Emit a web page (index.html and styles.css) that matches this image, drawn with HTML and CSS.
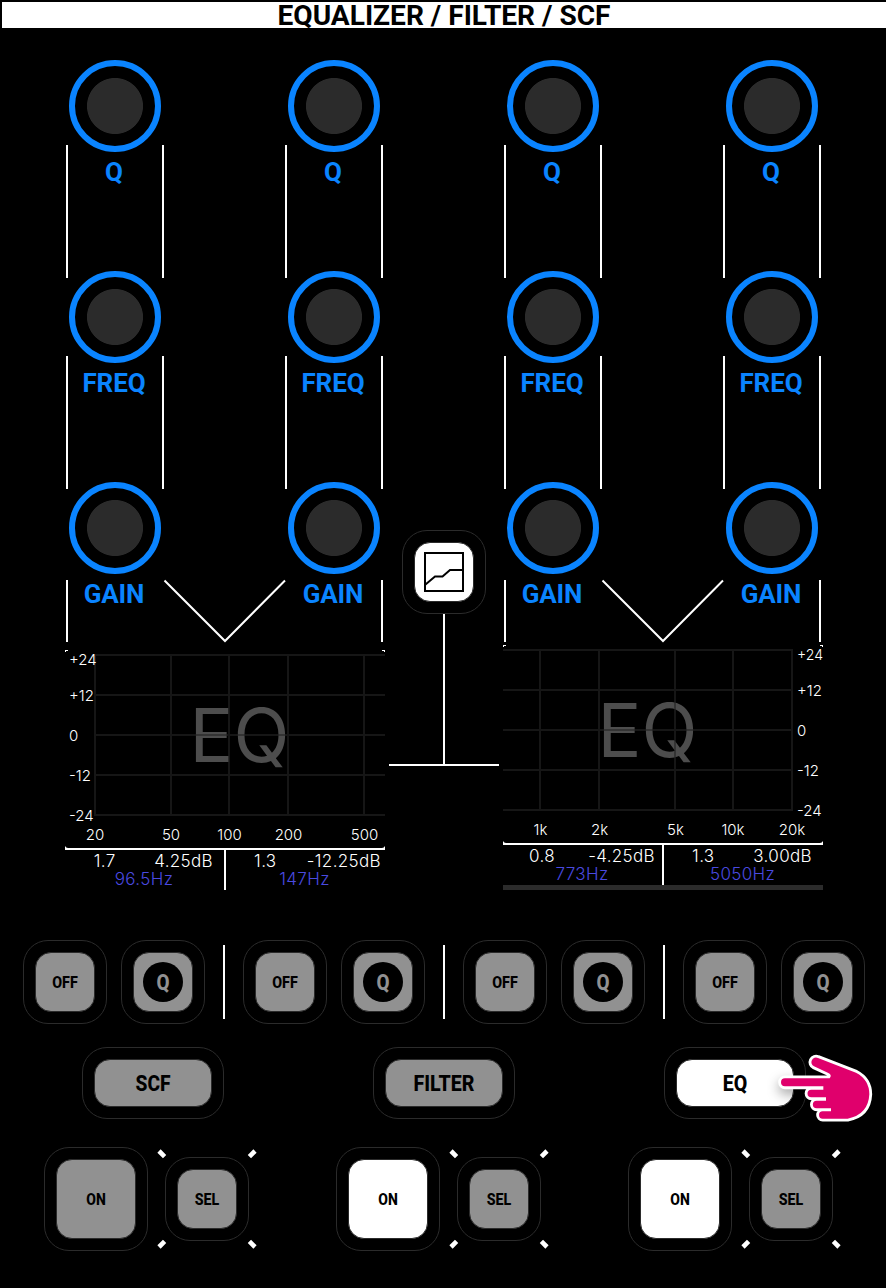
FILE: index.html
```html
<!DOCTYPE html>
<html lang="en">
<head>
<meta charset="utf-8">
<title>Equalizer / Filter / SCF</title>
<link rel="stylesheet" href="styles.css">
</head>
<body>
<main class="panel">
  <header class="title"><svg width="884" height="26"><text x="442" y="23" text-anchor="middle" textLength="333" lengthAdjust="spacingAndGlyphs">EQUALIZER / FILTER / SCF</text></svg></header>

  <section class="equalizer">
    <div class="band">
      <div class="knobs">
        <div class="cell"><div class="knob"></div><div class="stem">Q</div></div>
        <div class="cell"><div class="knob"></div><div class="stem">Q</div></div>
        <div class="cell"><div class="knob"></div><div class="stem">FREQ</div></div>
        <div class="cell"><div class="knob"></div><div class="stem">FREQ</div></div>
        <div class="cell last"><div class="knob"></div><div class="stem open-right">GAIN</div></div>
        <div class="cell last"><div class="knob"></div><div class="stem open-left">GAIN</div></div>
        <svg class="join" width="123" height="64"><path d="M0.500 0.500L61 61L121 0.500"/></svg>
      </div>
      <svg class="graph low" width="320" height="240">
        <path class="corner" d="M0 0H3V1H1V2H0ZM320 0H317V1H319V2H320ZM0 200V196Q1 198 3 198H317Q319 198 320 196V200Z"/>
        <text class="mark" x="124.500" y="112" textLength="100" lengthAdjust="spacingAndGlyphs">EQ</text>
        <path class="grid" d="M29 5H320M29 45H320M29 85H320M29 125H320M29 165H320M30 6V165M106 6V165M164 6V165M223 6V165M299 6V165"/>
        <g class="axis">
          <text x="4" y="15">+24</text><text x="4" y="51">+12</text><text x="4" y="91">0</text><text x="4" y="131">-12</text><text x="4" y="171">-24</text>
          <g text-anchor="middle"><text x="30" y="190">20</text><text x="106" y="190">50</text><text x="164.500" y="190">100</text><text x="223.500" y="190">200</text><text x="299.500" y="190">500</text></g>
        </g>
        <path class="divider" d="M160 200V240"/>
        <g class="value"><text x="50.500" y="217">1.7</text><text x="148" y="217">4.25dB</text><text x="211.500" y="217">1.3</text><text x="316" y="217">-12.25dB</text></g>
        <g class="hertz"><text x="79" y="235">96.5Hz</text><text x="239.500" y="235">147Hz</text></g>
      </svg>
    </div>

    <div class="link">
      <div class="button"><div class="cap lit"><svg width="40" height="40" class="curve"><path d="M1 1H39V39H1Z"/><path d="M1.500 32.500L11 24.500H18.500L26 18H39"/></svg></div></div>
      <div class="link-down"></div>
      <div class="link-across"></div>
    </div>

    <div class="band">
      <div class="knobs">
        <div class="cell"><div class="knob"></div><div class="stem">Q</div></div>
        <div class="cell"><div class="knob"></div><div class="stem">Q</div></div>
        <div class="cell"><div class="knob"></div><div class="stem">FREQ</div></div>
        <div class="cell"><div class="knob"></div><div class="stem">FREQ</div></div>
        <div class="cell last"><div class="knob"></div><div class="stem open-right">GAIN</div></div>
        <div class="cell last"><div class="knob"></div><div class="stem open-left">GAIN</div></div>
        <svg class="join" width="123" height="64"><path d="M0.500 0.500L61 61L121 0.500"/></svg>
      </div>
      <svg class="graph" width="320" height="245">
        <path class="corner" d="M0 0H3V1H1V2H0ZM320 0H317V1H319V2H320ZM0 200V196Q1 198 3 198H317Q319 198 320 196V200Z"/>
        <text class="mark" x="94.500" y="112" textLength="100" lengthAdjust="spacingAndGlyphs">EQ</text>
        <path class="grid" d="M0 5H290M0 45H290M0 85H290M0 125H290M0 165H290M37 6V165M96 6V165M172 6V165M230 6V165M289 6V165"/>
        <g class="axis">
          <text x="294" y="15" textLength="26" lengthAdjust="spacingAndGlyphs">+24</text><text x="294" y="51">+12</text><text x="294" y="91">0</text><text x="294" y="131">-12</text><text x="294" y="171">-24</text>
          <g text-anchor="middle"><text x="37.500" y="190">1k</text><text x="96.500" y="190">2k</text><text x="172.500" y="190">5k</text><text x="230" y="190">10k</text><text x="289" y="190">20k</text></g>
        </g>
        <path class="divider" d="M160 200V240"/>
        <g class="value"><text x="52" y="217">0.8</text><text x="152" y="217">-4.25dB</text><text x="211.500" y="217">1.3</text><text x="309" y="217">3.00dB</text></g>
        <g class="hertz"><text x="79" y="235">773Hz</text><text x="239.500" y="235">5050Hz</text></g>
        <path class="scroll" d="M0 240H320V245H0Z"/>
      </svg>
    </div>
  </section>

  <section class="toggles">
    <div class="button"><div class="cap"><svg width="58" height="58"><text x="29" y="34.500" textLength="25.500" lengthAdjust="spacingAndGlyphs">OFF</text></svg></div></div>
    <div class="button"><div class="cap"><svg width="58" height="58"><circle cx="29" cy="29" r="20"/><text class="q" x="29" y="37" textLength="13" lengthAdjust="spacingAndGlyphs">Q</text></svg></div></div>
    <div class="separator"></div>
    <div class="button"><div class="cap"><svg width="58" height="58"><text x="29" y="34.500" textLength="25.500" lengthAdjust="spacingAndGlyphs">OFF</text></svg></div></div>
    <div class="button"><div class="cap"><svg width="58" height="58"><circle cx="29" cy="29" r="20"/><text class="q" x="29" y="37" textLength="13" lengthAdjust="spacingAndGlyphs">Q</text></svg></div></div>
    <div class="separator"></div>
    <div class="button"><div class="cap"><svg width="58" height="58"><text x="29" y="34.500" textLength="25.500" lengthAdjust="spacingAndGlyphs">OFF</text></svg></div></div>
    <div class="button"><div class="cap"><svg width="58" height="58"><circle cx="29" cy="29" r="20"/><text class="q" x="29" y="37" textLength="13" lengthAdjust="spacingAndGlyphs">Q</text></svg></div></div>
    <div class="separator"></div>
    <div class="button"><div class="cap"><svg width="58" height="58"><text x="29" y="34.500" textLength="25.500" lengthAdjust="spacingAndGlyphs">OFF</text></svg></div></div>
    <div class="button"><div class="cap"><svg width="58" height="58"><circle cx="29" cy="29" r="20"/><text class="q" x="29" y="37" textLength="13" lengthAdjust="spacingAndGlyphs">Q</text></svg></div></div>
  </section>

  <section class="modes">
    <div class="button wide"><div class="cap"><svg width="116" height="46"><text class="mode" x="58" y="31" textLength="35" lengthAdjust="spacingAndGlyphs">SCF</text></svg></div></div>
    <div class="button wide"><div class="cap"><svg width="116" height="46"><text class="mode" x="58" y="31" textLength="61" lengthAdjust="spacingAndGlyphs">FILTER</text></svg></div></div>
    <div class="button wide"><div class="cap lit"><svg width="116" height="46"><text class="mode" x="58" y="31" textLength="24.500" lengthAdjust="spacingAndGlyphs">EQ</text></svg></div>
      <svg class="hand" width="130" height="95" viewBox="390 20 390 285"><path d="M531 68L645 112Q685 133 685 177Q682 238 620 250H545A10.500 10.500 0 0 1 545 228H570V219H527A11 11 0 0 1 527 196H555V186H511A11.500 11.500 0 0 1 511 163H547V153H432A12 12 0 0 1 432 129H566Q574 119 562 113L519 93A13.500 13.500 0 0 1 531 68Z"/></svg>
    </div>
  </section>

  <section class="channels">
    <div class="channel">
      <div class="button large"><div class="cap"><svg width="78" height="78"><text x="39" y="44.500" textLength="19.500" lengthAdjust="spacingAndGlyphs">ON</text></svg></div></div>
      <div class="select"><svg class="ticks" width="100" height="100"><path d="M2 2L7.600 7.600M98 2L92.400 7.600M2 98L7.600 92.400M98 98L92.400 92.400"/></svg><div class="button"><div class="cap"><svg width="58" height="58"><text x="29" y="34.500" textLength="24.500" lengthAdjust="spacingAndGlyphs">SEL</text></svg></div></div></div>
    </div>
    <div class="channel">
      <div class="button large"><div class="cap lit"><svg width="78" height="78"><text x="39" y="44.500" textLength="19.500" lengthAdjust="spacingAndGlyphs">ON</text></svg></div></div>
      <div class="select"><svg class="ticks" width="100" height="100"><path d="M2 2L7.600 7.600M98 2L92.400 7.600M2 98L7.600 92.400M98 98L92.400 92.400"/></svg><div class="button"><div class="cap"><svg width="58" height="58"><text x="29" y="34.500" textLength="24.500" lengthAdjust="spacingAndGlyphs">SEL</text></svg></div></div></div>
    </div>
    <div class="channel">
      <div class="button large"><div class="cap lit"><svg width="78" height="78"><text x="39" y="44.500" textLength="19.500" lengthAdjust="spacingAndGlyphs">ON</text></svg></div></div>
      <div class="select"><svg class="ticks" width="100" height="100"><path d="M2 2L7.600 7.600M98 2L92.400 7.600M2 98L7.600 92.400M98 98L92.400 92.400"/></svg><div class="button"><div class="cap"><svg width="58" height="58"><text x="29" y="34.500" textLength="24.500" lengthAdjust="spacingAndGlyphs">SEL</text></svg></div></div></div>
    </div>
  </section>
</main>
</body>
</html>
```
FILE: styles.css
```css
* { box-sizing: border-box; }
body { margin: 0; background: #000; font-family: Roboto, sans-serif; }
svg { display: block; overflow: visible; }
.panel { width: 886px; height: 1288px; padding: 2px 0 0; background: #000; overflow: hidden; }

.title { margin-left: 2px; height: 26px; background: #fff; }
.title text { font-size: 27px; font-weight: 700; fill: #000; }

/* knobs and graphs */
.equalizer { display: grid; grid-template-columns: 320px 118px 320px; padding: 32px 0 0 65px; height: 912px; }
.knobs { display: grid; grid-template-columns: 98px 98px; column-gap: 121px; grid-template-rows: 211px 211px 163px; padding-left: 1px; position: relative; }
.knob { width: 92px; height: 92px; margin: 0 auto; padding: 11px; border: 6px solid #0a84ff; border-radius: 50%; background: radial-gradient(circle closest-side, #2b2b2b 27.6px, transparent 28.4px) content-box; }
.stem { height: 133px; margin-top: -7px; padding-right: 2px; border: solid #fff; border-width: 0 2px; color: #0a84ff; font-size: 26px; font-weight: 700; line-height: 54px; letter-spacing: -.1px; text-align: center; }
.last .stem { height: 62px; margin-top: 6px; line-height: 28px; }
.open-right { border-right-color: transparent; }
.open-left { border-left-color: transparent; }
.join { position: absolute; left: 99px; top: 520px; fill: none; stroke: #fff; stroke-width: 2; }
.low { margin-top: 5px; }
.corner { fill: #fff; }
.mark { font: 400 74px Inter, sans-serif; fill: #4d4d4d; }
.grid { fill: none; stroke: rgba(36, 36, 36, .6); stroke-width: 2; }
.axis { font: 350 15px Inter, sans-serif; fill: #fff; }
.divider { stroke: #fff; stroke-width: 2; }
.value, .hertz { font: 350 17px Inter, sans-serif; letter-spacing: .35px; }
.value { fill: #fff; text-anchor: end; }
.hertz { fill: #4a4ae0; text-anchor: middle; }
.scroll { fill: #2b2b2b; }
.link { display: flex; flex-direction: column; align-items: center; padding-top: 470px; }
.link-down { width: 2px; height: 150px; background: #fff; }
.link-across { width: 110px; height: 2px; background: #fff; }
.curve { fill: none; stroke: #000; stroke-width: 2; }

/* buttons */
.button { width: 84px; height: 84px; flex: none; padding: 11px; border: 1px solid #2b2b2b; border-radius: 25px; }
.cap { width: 100%; height: 100%; display: grid; place-items: center; border: 1px solid #2b2b2b; border-radius: 16px; background: #919191; overflow: hidden; }
.cap.lit { background: #fff; }
.button text { font-size: 16px; font-weight: 800; text-anchor: middle; fill: #000; }
.button .q { font-size: 22px; fill: #919191; }
.button .mode { font-size: 22px; }
.wide { width: 142px; height: 72px; position: relative; }
.large { width: 104px; height: 104px; }
.toggles { display: flex; align-items: center; padding-left: 23px; height: 84px; }
.toggles .button + .button { margin-left: 14px; }
.separator { flex: none; width: 2px; height: 74px; margin: 0 18px; background: #fff; }
.modes { display: flex; gap: 149px; padding: 23px 0 0 82px; }
.hand { position: absolute; left: 105.5px; top: -6px; filter: drop-shadow(0 5px 6px rgba(0, 0, 0, .35)); }
.hand path { fill: #e0006c; stroke: #fff; stroke-width: 17; stroke-linejoin: round; paint-order: stroke; }
.channels { display: flex; gap: 79px; padding: 28px 0 0 44px; }
.channel { display: flex; align-items: center; gap: 9px; }
.select { display: grid; width: 100px; height: 100px; place-items: center; }
.select > * { grid-area: 1 / 1; }
.ticks { stroke: #fff; stroke-width: 4.6; }
```
